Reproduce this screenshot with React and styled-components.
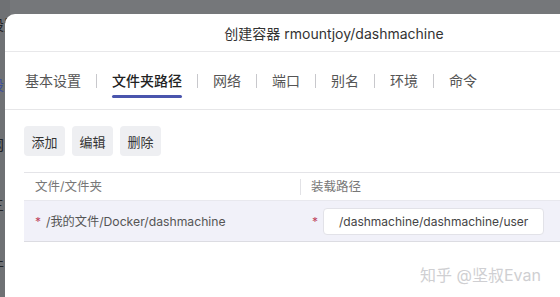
import React from "react";
import styled, { createGlobalStyle } from "styled-components";

const GlobalStyle = createGlobalStyle`
  html, body {
    margin: 0;
    padding: 0;
    width: 560px;
    height: 297px;
    overflow: hidden;
    background: #727477;
    font-family: Inter, "Noto Sans CJK SC", sans-serif;
  }
`;

const tabs = ["基本设置", "文件夹路径", "网络", "端口", "别名", "环境", "命令"];

export default function App() {
  return (
    <Page>
      <GlobalStyle />
      {/* page behind the dialog, mostly hidden */}
      <BackPage>
        <BackItem>设置</BackItem>
        <BackItem lit>设置</BackItem>
        <BackItem>网</BackItem>
        <BackItem>三</BackItem>
        <BackItem>件</BackItem>
      </BackPage>

      <Modal>
        <Header>创建容器 rmountjoy/dashmachine</Header>
        <TabBar>
          {tabs.map((t, i) => (
            <React.Fragment key={t}>
              {i > 0 && <TabSep />}
              <Tab active={i === 1}>{t}</Tab>
            </React.Fragment>
          ))}
        </TabBar>
        <Body>
          <Toolbar>
            <Btn>添加</Btn>
            <Btn>编辑</Btn>
            <Btn>删除</Btn>
          </Toolbar>
          <Table>
            <HeadRow>
              <HeadCell>文件/文件夹</HeadCell>
              <HeadCell divider>装载路径</HeadCell>
            </HeadRow>
            <Row>
              <Cell>
                <Star>*</Star>/我的文件/Docker/dashmachine
              </Cell>
              <Cell second>
                <Star>*</Star>
                <PathInput>/dashmachine/dashmachine/user</PathInput>
              </Cell>
            </Row>
          </Table>
          <Watermark>知乎 @坚叔Evan</Watermark>
        </Body>
      </Modal>
    </Page>
  );
}

const Page = styled.div`
  position: relative;
  width: 560px;
  height: 297px;
  overflow: hidden;
  background: #75777a;
`;

const BackPage = styled.div`
  display: flex;
  flex-direction: column;
  gap: 42px;
  padding-top: 16px;
  margin-left: -10px;
  width: 20px;
  background: #6f7174;
  height: 297px;
`;

const BackItem = styled.div`
  font-size: 14px;
  line-height: 18px;
  color: ${(p) => (p.lit ? "#3d4f9e" : "#1f2125")};
  white-space: nowrap;
`;

const Modal = styled.div`
  position: absolute;
  left: 5px;
  top: 14px;
  width: 658px;
  height: 320px;
  background: #fff;
  border-radius: 10px 10px 0 0;
`;

const Header = styled.div`
  height: 37px;
  display: flex;
  align-items: center;
  justify-content: center;
  font-size: 14px;
  color: #333;
  border-bottom: 1px solid #e8e8ea;
`;

const TabBar = styled.div`
  height: 57px;
  display: flex;
  align-items: center;
  padding-left: 20px;
  border-bottom: 1px solid #e6e6e8;
`;

const Tab = styled.div`
  position: relative;
  font-size: 14px;
  line-height: 20px;
  color: ${(p) => (p.active ? "#222" : "#555")};
  font-weight: ${(p) => (p.active ? 500 : 400)};
  &::after {
    content: "";
    display: ${(p) => (p.active ? "block" : "none")};
    position: absolute;
    left: 0;
    right: 0;
    bottom: -7px;
    height: 3px;
    border-radius: 2px;
    background: #4a55ad;
  }
`;

const TabSep = styled.div`
  width: 1px;
  height: 14px;
  background: #c8c8cc;
  margin: 0 15px;
`;

const Body = styled.div`
  padding: 16px 0 0 19px;
`;

const Toolbar = styled.div`
  display: flex;
  gap: 7px;
  margin-bottom: 16px;
`;

const Btn = styled.div`
  width: 41px;
  height: 30px;
  display: flex;
  align-items: center;
  justify-content: center;
  background: #eeeff2;
  border-radius: 4px;
  font-size: 13px;
  color: #333;
`;

const Table = styled.div`
  border-top: 1px solid #e4e4e8;
`;

const HeadRow = styled.div`
  display: grid;
  grid-template-columns: 276px 1fr;
  height: 27px;
  align-items: center;
`;

const HeadCell = styled.div`
  font-size: 12.5px;
  color: #777;
  padding-left: ${(p) => (p.divider ? "10px" : "11px")};
  border-left: ${(p) => (p.divider ? "1px solid #e2e2e6" : "none")};
  line-height: 16px;
`;

const Row = styled.div`
  box-sizing: border-box;
  display: grid;
  grid-template-columns: 276px 1fr;
  height: 42px;
  align-items: center;
  background: #f1f1f9;
  border-top: 1px solid #e8e8ee;
  border-bottom: 1px solid #dcdce2;
`;

const Cell = styled.div`
  display: flex;
  align-items: center;
  font-size: 12.2px;
  color: #555;
  padding-left: ${(p) => (p.second ? "12px" : "11px")};
`;

const Star = styled.span`
  color: #c0455e;
  font-size: 12px;
  margin-right: 5px;
`;

const PathInput = styled.div`
  width: 204px;
  height: 25px;
  display: flex;
  align-items: center;
  padding-left: 15px;
  background: #fff;
  border: 1px solid #e2e2e8;
  border-radius: 4px;
  font-size: 12px;
  color: #444;
  white-space: nowrap;
`;

const Watermark = styled.div`
  margin: 20px 0 0 396px;
  font-size: 16px;
  color: #cfcfd2;
`;
